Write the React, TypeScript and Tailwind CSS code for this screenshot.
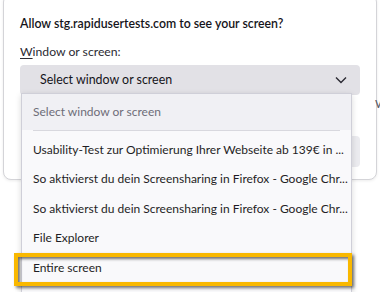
import React from "react";

const rows = [
  "Usability-Test zur Optimierung Ihrer Webseite ab 139€ in ...",
  "So aktivierst du dein Screensharing in Firefox - Google Chr...",
  "So aktivierst du dein Screensharing in Firefox - Google Chr...",
  "File Explorer",
  "Entire screen",
];

export default function App() {
  return (
    <div
      className="relative w-[380px] h-[292px] overflow-hidden bg-white text-[#15141a]"
      style={{ fontFamily: 'Lato, "Noto Sans", sans-serif' }}
    >
      {/* dialog panel */}
      <div className="ml-[3px] -mt-[6px] w-[374px] h-[186px] rounded-lg border border-[#d4d4d8] bg-white shadow-[0_1px_3px_rgba(0,0,0,0.08)] pt-[20px] pl-[16px] pr-[16px]">
        <div className="text-[12.3px] leading-[18px] font-semibold">
          Allow stg.rapidusertests.com to see your screen?
        </div>
        <div className="mt-[10px] text-[12.2px] leading-[18px] text-[#2b2a33]">
          <span className="underline underline-offset-2">W</span>indow or screen:
        </div>
        <div className="mt-[4px] w-[340px] h-[30px] rounded-[4px] bg-[#e2e1e6] flex items-center justify-between pl-[20px] pr-[13px]">
          <span className="text-[12.4px]">Select window or screen</span>
          <svg width="12" height="8" viewBox="0 0 12 8" fill="none">
            <path d="M1 1.5 L6 6.5 L11 1.5" stroke="#2b2a33" strokeWidth="1.4" />
          </svg>
        </div>
        <div className="mt-[41px] flex justify-end">
          <div className="w-[24px] h-[31px] rounded-[4px] bg-[#ebebef]" />
        </div>
      </div>

      {/* cut-off text outside dialog */}
      <div className="absolute left-[375px] top-[95px] text-[12px] text-[#5b5b66]">W</div>

      {/* dropdown popup */}
      <div className="absolute left-[21px] top-[93px] w-[331px] h-[210px] overflow-hidden border border-[#cfcfd8] bg-[#f9f9fb] shadow-[0_2px_6px_rgba(0,0,0,0.15)] text-[12px]">
        <div className="h-[36px] bg-[#f0f0f4] flex items-center pl-[11px] text-[#6e6d78]">
          Select window or screen
        </div>
        <div className="mx-[11px] h-px bg-[#d8d8de]" />
        <div className="pt-[4px]">
          {rows.map((r, i) => (
            <div key={i} className="h-[29.5px] flex items-center pl-[11px] pr-[8px] text-[#1f1e25] whitespace-nowrap overflow-hidden">
              {r}
            </div>
          ))}
        </div>
      </div>

      {/* highlight box */}
      <div className="absolute left-[14px] top-[253px] w-[338px] h-[33px] border-[4px] border-[#f9b800] shadow-[2px_2px_3px_rgba(0,0,0,0.55),inset_2px_2px_3px_rgba(0,0,0,0.55)]" />
    </div>
  );
}
